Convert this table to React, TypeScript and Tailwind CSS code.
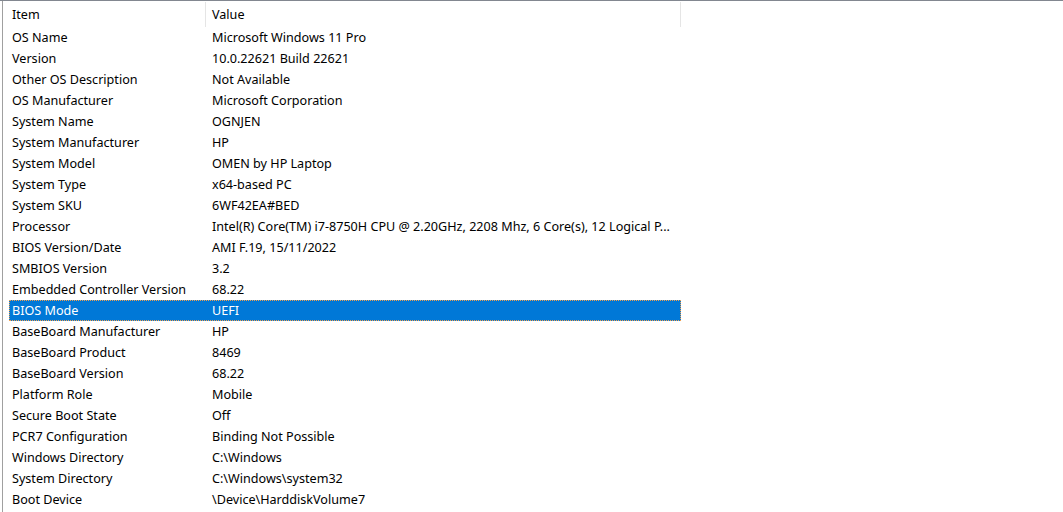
const rows: [string, string][] = [
  ["OS Name", "Microsoft Windows 11 Pro"],
  ["Version", "10.0.22621 Build 22621"],
  ["Other OS Description", "Not Available"],
  ["OS Manufacturer", "Microsoft Corporation"],
  ["System Name", "OGNJEN"],
  ["System Manufacturer", "HP"],
  ["System Model", "OMEN by HP Laptop"],
  ["System Type", "x64-based PC"],
  ["System SKU", "6WF42EA#BED"],
  ["Processor", "Intel(R) Core(TM) i7-8750H CPU @ 2.20GHz, 2208 Mhz, 6 Core(s), 12 Logical P..."],
  ["BIOS Version/Date", "AMI F.19, 15/11/2022"],
  ["SMBIOS Version", "3.2"],
  ["Embedded Controller Version", "68.22"],
  ["BIOS Mode", "UEFI"],
  ["BaseBoard Manufacturer", "HP"],
  ["BaseBoard Product", "8469"],
  ["BaseBoard Version", "68.22"],
  ["Platform Role", "Mobile"],
  ["Secure Boot State", "Off"],
  ["PCR7 Configuration", "Binding Not Possible"],
  ["Windows Directory", "C:\\Windows"],
  ["System Directory", "C:\\Windows\\system32"],
  ["Boot Device", "\\Device\\HarddiskVolume7"],
];

const App = () => {
  return (
    <div
      className="w-[1063px] h-[512px] bg-white overflow-hidden border-t border-[#828790] text-[12.6px] text-black"
      style={{ fontFamily: '"Noto Sans", "Open Sans", sans-serif' }}
    >
      <div className="h-full pl-[2px]">
        <div className="h-full border-l border-[#a0a0a0] pl-[6px]">
          {/* Column header */}
          <div className="flex h-[26px]">
            <div className="w-[196px] pl-[3px] pt-[2px] flex items-center">Item</div>
            <div className="w-px mt-[1px] h-[25px] bg-[#e5e5e5]" />
            <div className="w-[474px] pl-[6px] pt-[2px] flex items-center">Value</div>
            <div className="w-px mt-[1px] h-[25px] bg-[#e5e5e5]" />
          </div>

          {/* Rows */}
          <div className="w-[672px]">
            {rows.map(([item, value], i) => {
              const selected = item === "BIOS Mode";
              return (
                <div
                  key={i}
                  className={
                    selected
                      ? "flex h-[21px] pt-[2px] items-center bg-[#0078d7] text-white outline outline-1 -outline-offset-1 outline-dotted outline-[#f0a050]"
                      : "flex h-[21px] pt-[2px] items-center"
                  }
                >
                  <div className="w-[197px] pl-[3px] whitespace-nowrap overflow-hidden">{item}</div>
                  <div className="flex-1 pl-[6px] whitespace-nowrap overflow-hidden">{value}</div>
                </div>
              );
            })}
          </div>
        </div>
      </div>
    </div>
  );
};

export default App;
